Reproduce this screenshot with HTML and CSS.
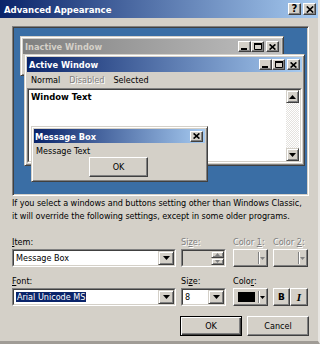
FILE: index.html
```html
<!DOCTYPE html>
<html>
<head>
<meta charset="utf-8">
<link rel="stylesheet" href="styles.css">
</head>
<body>
<div class="dlg">
  <div class="cap">
    <span class="cap-t">Advanced Appearance</span>
    <span class="cap-btns">
      <span class="tb q">?</span>
      <span class="tb"><svg width="8" height="7" viewBox="0 0 8 7"><path d="M0.8 0.5L7.2 6.5M7.2 0.5L0.8 6.5" stroke="#000" stroke-width="1.7"/></svg></span>
    </span>
  </div>
  <div class="content">
    <div class="preview">
      <div class="win inactive">
        <div class="wcap gray">
          <span class="wcap-t">Inactive Window</span>
          <span class="wbtns">
            <span class="sb-btn"><svg width="7" height="7" viewBox="0 0 7 7"><rect x="0" y="5" width="6" height="2" fill="#000"/></svg></span>
            <span class="sb-btn"><svg width="8" height="7" viewBox="0 0 8 7"><path d="M0.5 0.5h7v6h-7z" fill="none" stroke="#000"/><rect x="0" y="0" width="8" height="2" fill="#000"/></svg></span>
            <span class="sb-btn x"><svg width="7" height="6" viewBox="0 0 7 6"><path d="M0.6 0.4L6.4 5.6M6.4 0.4L0.6 5.6" stroke="#000" stroke-width="1.6"/></svg></span>
          </span>
        </div>
      </div>
      <div class="win active">
        <div class="wcap blue">
          <span class="wcap-t">Active Window</span>
          <span class="wbtns">
            <span class="sb-btn"><svg width="7" height="7" viewBox="0 0 7 7"><rect x="0" y="5" width="6" height="2" fill="#000"/></svg></span>
            <span class="sb-btn"><svg width="8" height="7" viewBox="0 0 8 7"><path d="M0.5 0.5h7v6h-7z" fill="none" stroke="#000"/><rect x="0" y="0" width="8" height="2" fill="#000"/></svg></span>
            <span class="sb-btn x"><svg width="7" height="6" viewBox="0 0 7 6"><path d="M0.6 0.4L6.4 5.6M6.4 0.4L0.6 5.6" stroke="#000" stroke-width="1.6"/></svg></span>
          </span>
        </div>
        <div class="menu">
          <span>Normal</span>
          <span class="dis">Disabled</span>
          <span>Selected</span>
        </div>
        <div class="sunk text-area">
          <div class="in ta-in">
            <div class="wt">Window Text</div>
            <div class="scroll">
              <span class="sbb"><svg width="7" height="4" viewBox="0 0 7 4"><path d="M3.5 0L7 4H0z" fill="#000"/></svg></span>
              <span class="track"></span>
              <span class="sbb"><svg width="7" height="4" viewBox="0 0 7 4"><path d="M0 0h7L3.5 4z" fill="#000"/></svg></span>
            </div>
          </div>
        </div>
      </div>
      <div class="win msg">
        <div class="wcap blue">
          <span class="wcap-t">Message Box</span>
          <span class="wbtns">
            <span class="sb-btn x"><svg width="7" height="6" viewBox="0 0 7 6"><path d="M0.6 0.4L6.4 5.6M6.4 0.4L0.6 5.6" stroke="#000" stroke-width="1.6"/></svg></span>
          </span>
        </div>
        <div class="msg-body">
          <div class="msg-text">Message Text</div>
          <div class="pbtn msg-ok">OK</div>
        </div>
      </div>
    </div>

    <p class="info">If you select a windows and buttons setting other than Windows Classic,<br>it will override the following settings, except in some older programs.</p>

    <div class="frow">
      <div class="field f-main">
        <label><u>I</u>tem:</label>
        <div class="sunk combo"><div class="in combo-in"><span class="val">Message Box</span><span class="arr"><svg width="7" height="4" viewBox="0 0 7 4"><path d="M0 0h7L3.5 4z" fill="#000"/></svg></span></div></div>
      </div>
      <div class="field f-size">
        <label class="dis">Si<u>z</u>e:</label>
        <div class="sunk spin"><div class="in spin-in"><span class="val"></span><span class="spin-btns"><span class="sp"><svg width="5" height="3" viewBox="0 0 5 3"><path d="M2.5 0L5 3H0z" fill="#808080"/></svg></span><span class="sp"><svg width="5" height="3" viewBox="0 0 5 3"><path d="M0 0h5L2.5 3z" fill="#808080"/></svg></span></span></div></div>
      </div>
      <div class="field f-col">
        <label class="dis">Color <u>1</u>:</label>
        <div class="cbtn"><span class="sw"></span><span class="sep"></span><span class="carr"><svg width="5" height="3" viewBox="0 0 5 3"><path d="M0 0h5L2.5 3z" fill="#808080"/></svg></span></div>
      </div>
      <div class="field f-col">
        <label class="dis">Color <u>2</u>:</label>
        <div class="cbtn"><span class="sw"></span><span class="sep"></span><span class="carr"><svg width="5" height="3" viewBox="0 0 5 3"><path d="M0 0h5L2.5 3z" fill="#808080"/></svg></span></div>
      </div>
    </div>

    <div class="frow row2">
      <div class="field f-main">
        <label><u>F</u>ont:</label>
        <div class="sunk combo"><div class="in combo-in"><span class="val"><span class="sel">Arial Unicode MS</span></span><span class="arr"><svg width="7" height="4" viewBox="0 0 7 4"><path d="M0 0h7L3.5 4z" fill="#000"/></svg></span></div></div>
      </div>
      <div class="field f-size">
        <label>Si<u>z</u>e:</label>
        <div class="sunk combo small"><div class="in combo-in"><span class="val">8</span><span class="arr"><svg width="7" height="4" viewBox="0 0 7 4"><path d="M0 0h7L3.5 4z" fill="#000"/></svg></span></div></div>
      </div>
      <div class="field f-col">
        <label>Colo<u>r</u>:</label>
        <div class="cbtn"><span class="sw black"></span><span class="sep"></span><span class="carr"><svg width="5" height="3" viewBox="0 0 5 3"><path d="M0 0h5L2.5 3z" fill="#000"/></svg></span></div>
      </div>
      <div class="field f-col">
        <label>&nbsp;</label>
        <div class="bi"><span class="bbtn b">B</span><span class="bbtn i">I</span></div>
      </div>
    </div>

    <div class="actions">
      <div class="pbtn dlg-btn def">OK</div>
      <div class="pbtn dlg-btn">Cancel</div>
    </div>
  </div>
</div>
</body>
</html>
```

FILE: styles.css
```css
* { box-sizing: border-box; }
html, body { margin: 0; padding: 0; }
body {
  width: 320px;
  height: 344px;
  overflow: hidden;
  background: #D4D0C8;
  font-family: "DejaVu Sans Condensed", "DejaVu Sans", sans-serif;
  font-size: 9px;
  color: #000;
}
.dlg {
  width: 320px;
  height: 344px;
  display: flex;
  flex-direction: column;
  border-right: 2px solid #E8E6E2;
  border-bottom: 3px solid #A09C96;
}
.cap {
  height: 18px;
  display: flex;
  align-items: center;
  justify-content: space-between;
  padding: 0 2px 0 4px;
  background: linear-gradient(to right, #0A246A, #A6CAF0);
}
.cap-t {
  color: #fff;
  font-weight: bold;
  font-size: 9.5px;
}
.cap-btns { display: flex; gap: 2px; }
.tb, .sb-btn {
  display: flex;
  align-items: center;
  justify-content: center;
  background: #D4D0C8;
  border: 1px solid;
  border-color: #fff #404040 #404040 #fff;
  box-shadow: inset -1px -1px #808080;
}
.tb { width: 13px; height: 12px; }
.tb.q { font-weight: bold; font-size: 10px; font-family: "DejaVu Sans", sans-serif; line-height: 1; }

.content {
  flex: 1;
  padding: 8px 9px 0 12px;
  display: flex;
  flex-direction: column;
}

/* preview */
.preview {
  position: relative;
  width: 297px;
  height: 170px;
  background: #3A6EA5;
  border: 1px solid;
  border-color: #808080 #fff #fff #808080;
  box-shadow: inset 1px 1px #404040, inset -1px -1px #D4D0C8;
}
.win {
  position: absolute;
  display: flex;
  flex-direction: column;
  background: #D4D0C8;
  border: 1px solid;
  border-color: #D4D0C8 #404040 #404040 #D4D0C8;
  box-shadow: inset 1px 1px #fff, inset -1px -1px #808080;
  padding: 2px;
}
.inactive { left: 7px; top: 9px; width: 264px; height: 40px; }
.active { left: 11px; top: 27px; width: 281px; height: 112px; }
.msg { left: 18px; top: 99px; width: 177px; height: 56px; }

.wcap {
  height: 15px;
  flex: none;
  display: flex;
  align-items: center;
  justify-content: space-between;
  padding: 0 2px 0 2px;
  font-weight: bold;
  font-size: 9.2px;
}
.msg .wcap { height: 14px; padding-left: 1px; }
.wcap.blue { background: linear-gradient(to right, #0A246A, #A6CAF0); color: #fff; }
.wcap.gray { background: linear-gradient(to right, #808080, #C0C0C0); color: #D4D0C8; }
.wbtns { display: flex; }
.sb-btn { width: 13px; height: 11px; }
.sb-btn.x { margin-left: 2px; }

.menu {
  height: 16px;
  flex: none;
  display: flex;
  align-items: center;
  gap: 9px;
  padding-left: 4px;
}
.dis { color: #808080; text-shadow: 1px 1px 0 #fff; }

.sunk {
  border: 1px solid;
  border-color: #808080 #fff #fff #808080;
}
.sunk > .in {
  height: 100%;
  border: 1px solid;
  border-color: #404040 #D4D0C8 #D4D0C8 #404040;
}
.text-area { flex: 1; }
.ta-in {
  background: #fff;
  display: flex;
  justify-content: space-between;
}
.wt { font-weight: bold; font-size: 9.4px; padding: 1px 0 0 2px; line-height: 12px; }
.scroll {
  width: 13px;
  margin-right: 1px;
  display: flex;
  flex-direction: column;
}
.sbb {
  height: 13px;
  flex: none;
  display: flex;
  align-items: center;
  justify-content: center;
  background: #D4D0C8;
  border: 1px solid;
  border-color: #D4D0C8 #404040 #404040 #D4D0C8;
  box-shadow: inset 1px 1px #fff, inset -1px -1px #808080;
}
.track {
  flex: 1;
  background: repeating-conic-gradient(#fff 0 25%, #E4E2DE 0 50%) 0 0 / 2px 2px;
}

.msg-body { flex: 1; padding: 3px 0 0 2px; display: flex; flex-direction: column; }
.msg-text { line-height: 11px; height: 11px; }
.pbtn {
  display: flex;
  align-items: center;
  justify-content: center;
  background: #D4D0C8;
  border: 1px solid;
  border-color: #fff #404040 #404040 #fff;
  box-shadow: inset -1px -1px #808080;
}
.msg-ok { width: 59px; height: 20px; margin-left: 53px; }

.info {
  margin: 1px 0 0 0;
  line-height: 13px;
  white-space: nowrap;
  letter-spacing: -0.05px;
}

.frow {
  display: flex;
  gap: 5px;
  margin-top: 13px;
}
.frow.row2 { margin-top: 8px; }
.field { display: flex; flex-direction: column; }
.field label { height: 13px; line-height: 13px; display: block; white-space: nowrap; }
.f-main { width: 164px; }
.f-size { width: 47px; }
.f-col { width: 35px; }

.combo, .spin { height: 18px; }
.f-size .combo, .f-size .spin { width: 45px; }
.combo-in { background: #fff; display: flex; }
.combo-in .val { flex: 1; line-height: 14px; padding-left: 2px; overflow: hidden; white-space: nowrap; }
.sel { background: #0A246A; color: #fff; padding: 0 1px; }
.arr {
  width: 16px;
  display: flex;
  align-items: center;
  justify-content: center;
  background: #D4D0C8;
  border: 1px solid;
  border-color: #D4D0C8 #404040 #404040 #D4D0C8;
  box-shadow: inset 1px 1px #fff, inset -1px -1px #808080;
}
.spin-in { background: #D4D0C8; display: flex; }
.spin-in .val { flex: 1; }
.spin-btns { width: 13px; display: flex; flex-direction: column; }
.sp {
  flex: 1;
  display: flex;
  align-items: center;
  justify-content: center;
  border: 1px solid;
  border-color: #D4D0C8 #404040 #404040 #D4D0C8;
  box-shadow: inset 1px 1px #fff, inset -1px -1px #808080;
}

.cbtn {
  height: 18px;
  display: flex;
  align-items: center;
  padding: 0 2px 0 4px;
  border: 1px solid;
  border-color: #fff #404040 #404040 #fff;
  box-shadow: inset -1px -1px #808080;
}
.sw { width: 20px; height: 10px; }
.sw.black { background: #000; }
.sep { width: 2px; height: 12px; margin-left: 3px; border-left: 1px solid #808080; border-right: 1px solid #fff; }
.carr { flex: 1; display: flex; justify-content: center; }

.bi { display: flex; height: 18px; }
.bbtn {
  width: 17px;
  height: 18px;
  display: flex;
  align-items: center;
  justify-content: center;
  border: 1px solid;
  border-color: #fff #404040 #404040 #fff;
  box-shadow: inset -1px -1px #808080;
  font-weight: bold;
  font-size: 9px;
  font-family: "DejaVu Sans", sans-serif;
}
.bbtn.i { width: 18px; font-style: italic; font-family: "Liberation Serif", serif; font-size: 11px; }

.actions {
  display: flex;
  justify-content: flex-end;
  gap: 5px;
  margin-top: 10px;
  padding-right: 0;
}
.dlg-btn { width: 62px; height: 20px; }
.dlg-btn.def {
  border: 1px solid #000;
  box-shadow: inset 1px 1px #fff, inset -1px -1px #404040, inset -2px -2px #808080;
}
```
